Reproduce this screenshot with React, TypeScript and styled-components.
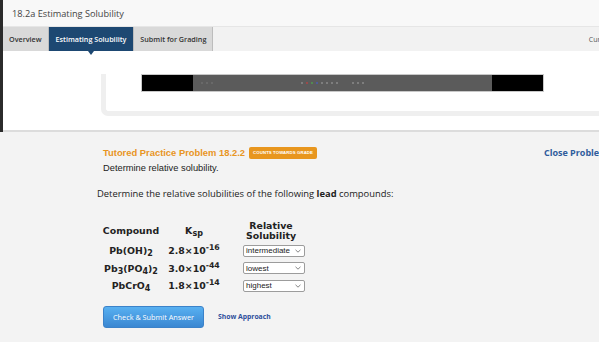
import React from "react";
import styled, { createGlobalStyle } from "styled-components";

const GlobalStyle = createGlobalStyle`
  html, body {
    margin: 0;
    padding: 0;
    background: #f3f3f3;
  }
  body {
    font-family: "Open Sans", "Liberation Sans", sans-serif;
  }
`;

const Page = styled.div`
  width: 599px;
  height: 342px;
  overflow: hidden;
  background: #f3f3f3;
`;

const TopArea = styled.div`
  border-left: 3px solid #2b2b2b;
  background: #fff;
`;

const TitleBar = styled.div`
  height: 26px;
  display: flex;
  align-items: center;
  padding-left: 9px;
  background: #f8f8f8;
  border-bottom: 1px solid #e6e6e6;
  font-size: 9.2px;
  color: #444;
`;

const TabBar = styled.div`
  height: 24px;
  display: flex;
  align-items: stretch;
  background: #f2f2f2;
`;

const Tab = styled.div<{ $active?: boolean }>`
  position: relative;
  display: flex;
  align-items: center;
  padding: 0 ${({ $active }) => ($active ? "7px" : "6px")};
  font-size: 7.2px;
  font-weight: 600;
  color: ${({ $active }) => ($active ? "#fff" : "#333")};
  background: ${({ $active }) => ($active ? "#1d4872" : "#d9d9d9")};
  border-right: 1px solid #bdbdbd;

  &::after {
    content: "";
    display: ${({ $active }) => ($active ? "block" : "none")};
    position: absolute;
    left: 50%;
    bottom: -4px;
    margin-left: -3px;
    border-left: 3px solid transparent;
    border-right: 3px solid transparent;
    border-top: 4px solid #1d4872;
  }
`;

const TabSpacer = styled.div`
  flex: 1;
`;

const CurrentLabel = styled.div`
  display: flex;
  align-items: center;
  margin-right: -15px;
  font-size: 7px;
  color: #555;
  white-space: nowrap;
`;

const WhiteArea = styled.div`
  padding: 23px 0 14px 98px;
  border-bottom: 2px solid #dcdcdc;
`;

const MediaCard = styled.div`
  margin-right: -40px;
  padding: 0 0 19px 35px;
  border-left: 5px solid #efefef;
  border-bottom: 5px solid #efefef;
  border-bottom-left-radius: 7px;
`;

const Player = styled.div`
  width: 403px;
  height: 18px;
  display: flex;
  border: 1px solid #c8c8c8;
  box-sizing: border-box;
`;

const PlayerEdge = styled.div`
  width: 51px;
  background: #000;
`;

const PlayerTrack = styled.div`
  flex: 1;
  background: #5b5b5b;
  display: flex;
  align-items: center;
  padding-left: 8px;
  gap: 3px;
`;

const Dot = styled.span<{ $c: string }>`
  width: 2px;
  height: 2px;
  border-radius: 1px;
  background: ${({ $c }) => $c};
`;

const DotGap = styled.span<{ $w: number }>`
  width: ${({ $w }) => $w}px;
`;

const Problem = styled.div`
  padding: 14px 0 0 103px;
`;

const HeadRow = styled.div`
  display: flex;
  align-items: center;
  height: 13px;
`;

const ProblemTitle = styled.div`
  font-family: "Liberation Sans", Arial, sans-serif;
  font-weight: 700;
  font-size: 9.4px;
  color: #e8951f;
`;

const Badge = styled.span`
  margin-left: 4px;
  padding: 0 4px;
  height: 12px;
  display: flex;
  align-items: center;
  border-radius: 2px;
  background: #e8961e;
  color: #fff;
  font-family: "Liberation Sans", Arial, sans-serif;
  font-weight: 700;
  font-size: 4.3px;
  letter-spacing: 0.1px;
`;

const CloseLink = styled.div`
  margin-left: auto;
  margin-right: -9px;
  font-size: 9px;
  font-weight: 700;
  color: #2f5c9c;
  white-space: nowrap;
`;

const Subtitle = styled.div`
  margin-top: 4px;
  font-family: "Liberation Sans", Arial, sans-serif;
  font-size: 9.3px;
  color: #222;
`;

const Prompt = styled.div`
  margin: 14px 0 0 -6px;
  font-size: 9.4px;
  color: #222;

  b {
    font-weight: 700;
  }
`;

const Table = styled.div`
  margin: 20px 0 0 -3px;
  display: grid;
  grid-template-columns: 62px 64px 79px;
  font-family: "DejaVu Sans", Verdana, sans-serif;
  font-weight: 700;
  font-size: 9.4px;
  color: #222;
`;

const HeadCell = styled.div<{ $end?: boolean }>`
  display: flex;
  align-items: center;
  justify-content: ${({ $end }) => ($end ? "flex-end" : "center")};
  padding-right: ${({ $end }) => ($end ? "9px" : "0")};
  text-align: center;
  line-height: 10.5px;
  height: 22px;
`;

const Cell = styled.div<{ $end?: boolean }>`
  display: flex;
  align-items: center;
  justify-content: ${({ $end }) => ($end ? "flex-end" : "center")};
  height: 17.5px;
  white-space: nowrap;
`;

const Sub = styled.sub`
  font-size: 8px;
  vertical-align: -2px;
  line-height: 0;
`;

const Sup = styled.sup`
  font-size: 7.8px;
  vertical-align: 4px;
  line-height: 0;
`;

const Select = styled.div`
  width: 62px;
  height: 12px;
  box-sizing: border-box;
  display: flex;
  align-items: center;
  justify-content: space-between;
  padding: 0 3px 0 2px;
  background: #fff;
  border: 1px solid #9c9c9c;
  border-radius: 2px;
  font-family: "Liberation Sans", Arial, sans-serif;
  font-weight: 400;
  font-size: 8px;
  color: #222;
`;

const Actions = styled.div`
  margin-top: 11px;
  display: flex;
  align-items: center;
  gap: 14px;
`;

const SubmitButton = styled.div`
  width: 101px;
  height: 22px;
  box-sizing: border-box;
  display: flex;
  align-items: center;
  justify-content: center;
  border-radius: 3px;
  border: 1px solid #3b82c9;
  background: linear-gradient(#58b0f1, #3a87d2);
  color: #fff;
  font-size: 7.3px;
`;

const ApproachLink = styled.div`
  font-size: 6.8px;
  font-weight: 700;
  color: #2d4f9c;
`;

const Chevron = () => (
  <svg width="6" height="4" viewBox="0 0 6 4">
    <path d="M0.5 0.8 L3 3.2 L5.5 0.8" fill="none" stroke="#666" strokeWidth="0.8" />
  </svg>
);

const rows = [
  { name: <>Pb(OH)<Sub>2</Sub></>, ksp: "2.8", exp: "-16", rel: "intermediate" },
  { name: <>Pb<Sub>3</Sub>(PO<Sub>4</Sub>)<Sub>2</Sub></>, ksp: "3.0", exp: "-44", rel: "lowest" },
  { name: <>PbCrO<Sub>4</Sub></>, ksp: "1.8", exp: "-14", rel: "highest" },
];

const dots = ["#8a8a8a", "#b04545", "#4f9a4f", "#4a5db0", "#8a8a8a", "#8a8a8a", "#8a8a8a", "#8a8a8a"];

export default function App() {
  return (
    <Page>
      <GlobalStyle />
      <TopArea>
        <TitleBar>18.2a Estimating Solubility</TitleBar>
        <TabBar>
          <Tab>Overview</Tab>
          <Tab $active>Estimating Solubility</Tab>
          <Tab>Submit for Grading</Tab>
          <TabSpacer />
          <CurrentLabel>Current</CurrentLabel>
        </TabBar>
        <WhiteArea>
          <MediaCard>
            <Player>
              <PlayerEdge />
              <PlayerTrack>
                <Dot $c="#6e6e6e" />
                <Dot $c="#6e6e6e" />
                <Dot $c="#6e6e6e" />
                <DotGap $w={82} />
                {dots.map((c, i) => (
                  <Dot key={i} $c={c} />
                ))}
                <DotGap $w={8} />
                <Dot $c="#8a8a8a" />
                <Dot $c="#8a8a8a" />
                <Dot $c="#8a8a8a" />
              </PlayerTrack>
              <PlayerEdge />
            </Player>
          </MediaCard>
        </WhiteArea>
      </TopArea>

      <Problem>
        <HeadRow>
          <ProblemTitle>Tutored Practice Problem 18.2.2</ProblemTitle>
          <Badge>COUNTS TOWARDS GRADE</Badge>
          <CloseLink>Close Problem</CloseLink>
        </HeadRow>
        <Subtitle>Determine relative solubility.</Subtitle>
        <Prompt>
          Determine the relative solubilities of the following <b>lead</b> compounds:
        </Prompt>

        <Table>
          <HeadCell>Compound</HeadCell>
          <HeadCell>
            <span>
              K<Sub>sp</Sub>
            </span>
          </HeadCell>
          <HeadCell $end>
            Relative
            <br />
            Solubility
          </HeadCell>
          {rows.map((r) => (
            <React.Fragment key={r.rel}>
              <Cell>
                <span>{r.name}</span>
              </Cell>
              <Cell>
                <span>
                  {r.ksp}×10<Sup>{r.exp}</Sup>
                </span>
              </Cell>
              <Cell $end>
                <Select>
                  <span>{r.rel}</span>
                  <Chevron />
                </Select>
              </Cell>
            </React.Fragment>
          ))}
        </Table>

        <Actions>
          <SubmitButton>Check &amp; Submit Answer</SubmitButton>
          <ApproachLink>Show Approach</ApproachLink>
        </Actions>
      </Problem>
    </Page>
  );
}
